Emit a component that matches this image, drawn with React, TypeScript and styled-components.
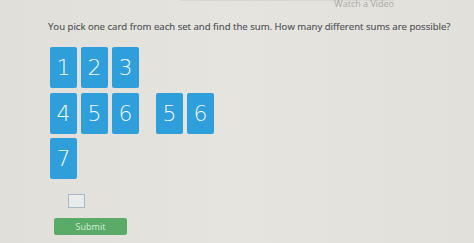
import React from 'react'
import styled, {createGlobalStyle} from "styled-components"

const GlobalStyle = createGlobalStyle`
    html, body {
        margin: 0;
        padding: 0;
        background-color: #e3e1dc;
        font-family: "Open Sans", "Liberation Sans", sans-serif;
    }
`

const sets = [
    [1, 2, 3, 4, 5, 6, 7],
    [5, 6],
]

function App() {
    return (
        <Page>
            <GlobalStyle/>
            <TopStrip>
                <span>Watch a Video</span>
            </TopStrip>
            <Question>
                You pick one card from each set and find the sum. How many different sums are possible?
            </Question>
            <SetsRow>
                {sets.map((set, i) => (
                    <CardSet key={i} $cols={i === 0 ? 3 : 2}>
                        {set.map((n, j) => <Card key={j}>{n}</Card>)}
                    </CardSet>
                ))}
            </SetsRow>
            <AnswerBox/>
            <SubmitBtn>Submit</SubmitBtn>
        </Page>
    )
}

export default App

const Page = styled.div`
    width: 474px;
    height: 243px;
    overflow: hidden;
    padding-left: 48px;
    box-sizing: border-box;
    background: linear-gradient(90deg, #e1dfda 0%, #e6e4df 50%, #e2e0db 100%);
`

const TopStrip = styled.div`
    height: 6px;
    display: flex;
    align-items: flex-end;
    justify-content: flex-end;
    border-top: 1px solid #d8d6d1;
    margin-left: 132px;
    width: 214px;
    span {
        font-size: 9px;
        line-height: 6px;
        height: 6px;
        color: #aaa8a4;
    }
`

const Question = styled.div`
    margin-top: 14px;
    font-size: 9.6px;
    line-height: 12px;
    color: #4e5155;
    white-space: nowrap;
    -webkit-text-stroke: 0.15px #4e5155;
`

const SetsRow = styled.div`
    display: flex;
    align-items: center;
    gap: 17px;
    margin-top: 14px;
    margin-left: 2px;
`

const CardSet = styled.div<{ $cols: number }>`
    display: grid;
    grid-template-columns: repeat(${props => props.$cols}, 27px);
    gap: 4px 4px;
    row-gap: 4.5px;
`

const Card = styled.div`
    width: 27px;
    height: 41px;
    border-radius: 2px;
    background-color: #2f9fdb;
    color: #f4f8fb;
    display: flex;
    align-items: center;
    justify-content: center;
    font-family: "DejaVu Sans", sans-serif;
    font-size: 22px;
    font-weight: 300;
`

const AnswerBox = styled.div`
    width: 15px;
    height: 12px;
    margin-top: 15px;
    margin-left: 20px;
    border: 1.5px solid #a9b7c6;
    background-color: #e9ebec;
`

const SubmitBtn = styled.div`
    width: 73px;
    height: 17px;
    margin-top: 10px;
    margin-left: 6px;
    border-radius: 2px;
    background-color: #5aab68;
    color: #d7eedb;
    font-size: 9px;
    display: flex;
    align-items: center;
    justify-content: center;
`
